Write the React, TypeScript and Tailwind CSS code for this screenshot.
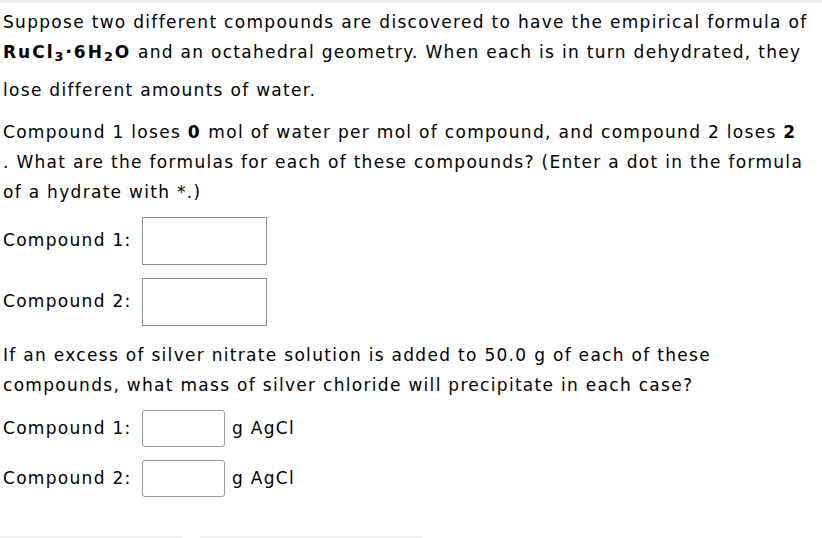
import React from "react";

const font = { fontFamily: 'Verdana, "DejaVu Sans", sans-serif' };

function Line({ children, h = "h-[30px]" }: { children: React.ReactNode; h?: string }) {
  return <div className={`${h} leading-[30px] whitespace-nowrap`}>{children}</div>;
}

function BigRow({ label }: { label: string }) {
  return (
    <div className="flex items-center">
      <span className="w-[139px] whitespace-nowrap">{label}</span>
      <input
        type="text"
        className="h-[48px] w-[125px] border border-[#8c8c8c] bg-white outline-none"
      />
    </div>
  );
}

function MassRow({ label }: { label: string }) {
  return (
    <div className="flex items-center">
      <span className="w-[139px] whitespace-nowrap">{label}</span>
      <input
        type="text"
        className="h-[37px] w-[83px] rounded-[3px] border border-[#9a9a9a] bg-white outline-none"
      />
      <span className="ml-[7px] whitespace-nowrap">g AgCl</span>
    </div>
  );
}

export default function App() {
  return (
    <div
      className="relative h-[538px] w-[822px] overflow-hidden bg-white text-[17px] tracking-[1.3px] text-black"
      style={font}
    >
      <div className="h-[3px] bg-[#f0f0f0]" />
      <div className="pl-[3px]">
        <div className="pt-[4px]">
          <Line>Suppose two different compounds are discovered to have the empirical formula of</Line>
          <Line h="h-[38px]">
            <b className="tracking-[2px]">
              RuCl<sub>3</sub>·6H<sub>2</sub>O
            </b>{" "}
            and an octahedral geometry. When each is in turn dehydrated, they
          </Line>
          <Line>lose different amounts of water.</Line>
        </div>

        <div className="mt-[12px]">
          <Line>
            Compound 1 loses <b className="tracking-[2px]">0</b> mol of water per mol of compound, and compound 2 loses{" "}
            <b className="tracking-[2px]">2</b>
          </Line>
          <Line>. What are the formulas for each of these compounds? (Enter a dot in the formula</Line>
          <Line h="h-[29px]">of a hydrate with *.)</Line>
        </div>

        <div className="mt-[11px] flex flex-col gap-[13px]">
          <BigRow label="Compound 1:" />
          <BigRow label="Compound 2:" />
        </div>

        <div className="mt-[14px]">
          <Line>If an excess of silver nitrate solution is added to 50.0 g of each of these</Line>
          <Line>compounds, what mass of silver chloride will precipitate in each case?</Line>
        </div>

        <div className="mt-[10px] flex flex-col gap-[13px]">
          <MassRow label="Compound 1:" />
          <MassRow label="Compound 2:" />
        </div>
      </div>

      <div className="absolute bottom-0 left-0 flex gap-[18px]">
        <div className="h-[2px] w-[182px] bg-[#f2f2f2]" />
        <div className="h-[2px] w-[222px] bg-[#f2f2f2]" />
      </div>
    </div>
  );
}
